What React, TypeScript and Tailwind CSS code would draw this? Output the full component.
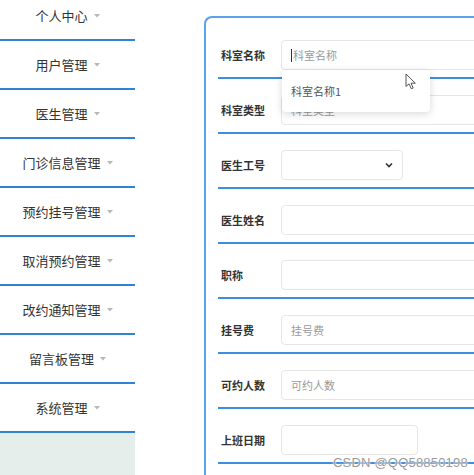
import React from "react";

const MENU = [
  "个人中心",
  "用户管理",
  "医生管理",
  "门诊信息管理",
  "预约挂号管理",
  "取消预约管理",
  "改约通知管理",
  "留言板管理",
  "系统管理",
];

type Row = {
  label: string;
  kind: "input" | "select" | "date";
  placeholder?: string;
};

const ROWS: Row[] = [
  { label: "科室名称", kind: "input", placeholder: "科室名称" },
  { label: "科室类型", kind: "input", placeholder: "科室类型" },
  { label: "医生工号", kind: "select" },
  { label: "医生姓名", kind: "input" },
  { label: "职称", kind: "input" },
  { label: "挂号费", kind: "input", placeholder: "挂号费" },
  { label: "可约人数", kind: "input", placeholder: "可约人数" },
  { label: "上班日期", kind: "date" },
];

const font = { fontFamily: '"Noto Sans CJK SC", "Noto Sans", sans-serif' };

function Caret() {
  return (
    <svg width="6" height="4" viewBox="0 0 6 4" className="ml-[6px] mt-[1px]">
      <path d="M0 0 L6 0 L3 3.5 Z" fill="#b8b8b8" />
    </svg>
  );
}

function Cursor() {
  return (
    <svg
      width="12"
      height="17"
      viewBox="0 0 12 17"
      className="absolute left-[123px] top-[3px]"
    >
      <path
        d="M1 1 L1 13.5 L4 10.8 L6.3 15.8 L8.2 15 L6 10.2 L10.3 10.2 Z"
        fill="#fff"
        stroke="#555"
        strokeWidth="1"
        strokeLinejoin="round"
      />
    </svg>
  );
}

function Field({ row, index }: { row: Row; index: number }) {
  if (row.kind === "select") {
    return (
      <div className="w-[122px] h-[30px] rounded border border-[#e6e6e6] flex items-center justify-end pr-[9px]">
        <svg width="8" height="6" viewBox="0 0 8 6">
          <path
            d="M1 1.5 L4 4.5 L7 1.5"
            fill="none"
            stroke="#333"
            strokeWidth="1.6"
          />
        </svg>
      </div>
    );
  }
  if (row.kind === "date") {
    return <div className="w-[137px] h-[30px] rounded border border-[#e6e6e6]" />;
  }
  return (
    <div className="relative flex-1 h-[30px] rounded border border-[#e6e6e6] flex items-center pl-[9px]">
      {index === 0 && <span className="w-px h-[13px] bg-[#333] mr-[1px]" />}
      <span className="text-[11px] text-[#9a9a9a]">{row.placeholder}</span>
      {index === 0 && (
        <div className="absolute left-0 top-[29px] z-10 w-[148px] h-[42px] rounded bg-white shadow-[0_2px_8px_rgba(0,0,0,0.15)] flex items-center pl-[9px]">
          <span className="text-[11px] text-[#555]">科室名称1</span>
          <Cursor />
        </div>
      )}
    </div>
  );
}

export default function App() {
  return (
    <div
      className="relative w-[474px] h-[475px] overflow-hidden flex bg-white"
      style={font}
    >
      {/* Sidebar */}
      <div className="w-[135px] shrink-0 -mt-2 flex flex-col">
        {MENU.map((m) => (
          <div
            key={m}
            className="h-[49px] shrink-0 border-b-2 border-[#2f82d6] flex items-center justify-center"
          >
            <span className="text-[13px] text-[#333]">{m}</span>
            <Caret />
          </div>
        ))}
        <div className="flex-1 bg-[#e6eeeb]" />
      </div>

      {/* Form panel */}
      <div className="pl-[69px] pt-4 shrink-0">
        <div className="w-[420px] h-[500px] border-l-2 border-t-2 border-[#5aa2ea] rounded-tl-lg pt-[6px] pl-3">
          {ROWS.map((row, i) => (
            <div
              key={row.label}
              className="h-[55px] pt-4 border-b-2 border-[#3b8ee2] flex items-start"
            >
              <div className="w-[63px] pl-[3px] h-[30px] flex items-center shrink-0">
                <span className="text-[11px] font-bold text-[#333]">
                  {row.label}
                </span>
              </div>
              <Field row={row} index={i} />
            </div>
          ))}
        </div>
      </div>

      {/* watermark */}
      <span
        className="absolute left-[333px] top-[453px] text-[13px] text-[#9a9a9a] tracking-[0.2px]"
        style={{
          fontFamily: '"Liberation Sans", sans-serif',
          textShadow: "0 0 2px #fff, 0 0 2px #fff",
        }}
      >
        CSDN @QQ58850198
      </span>
    </div>
  );
}
